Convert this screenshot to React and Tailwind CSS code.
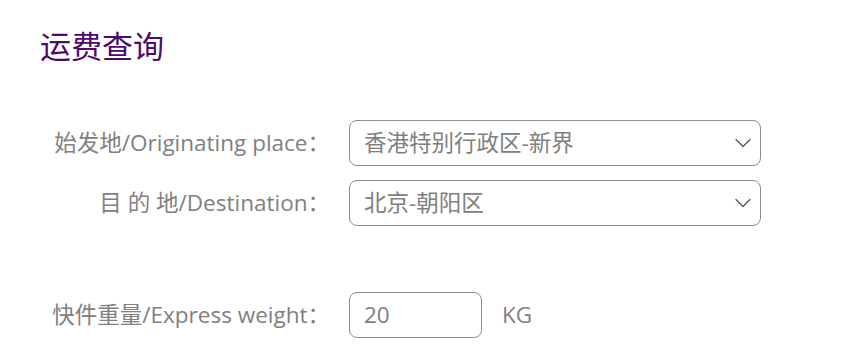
import { ChevronDown } from 'lucide-react'

function Label({ children }) {
  return (
    <div className="w-[330px] shrink-0 text-right text-[22.5px] text-[#808080] whitespace-nowrap">{children}</div>
  )
}

function Select({ value }) {
  return (
    <div className="ml-[19px] w-[412px] h-[46px] border border-[#8c8c8c] rounded-[8px] flex items-center justify-between pl-[14px] pr-[3px]">
      <span className="text-[22.5px] text-[#808080]">{value}</span>
      <ChevronDown size={28} strokeWidth={1.1} className="text-[#555]" />
    </div>
  )
}

export default function App() {
  return (
    <div className="w-[844px] h-[355px] bg-white overflow-hidden font-['Open_Sans','Noto_Sans_CJK_SC',sans-serif]">
      <div className="pl-[40px] pt-[24px]">
        <h1 className="text-[31px] leading-[44px] text-[#4b0a6d]">运费查询</h1>
      </div>

      <div className="mt-[52px] flex flex-col">
        <div className="flex items-center">
          <Label>始发地/Originating place：</Label>
          <Select value="香港特别行政区-新界" />
        </div>
        <div className="flex items-center mt-[14px]">
          <Label>目 的 地/Destination：</Label>
          <Select value="北京-朝阳区" />
        </div>
        <div className="flex items-center mt-[66px]">
          <Label>快件重量/Express weight：</Label>
          <div className="ml-[19px] w-[133px] h-[46px] border border-[#8c8c8c] rounded-[8px] flex items-center pl-[14px]">
            <span className="text-[22.5px] text-[#808080]">20</span>
          </div>
          <span className="ml-[20px] text-[22.5px] text-[#808080]">KG</span>
        </div>
      </div>
    </div>
  )
}
